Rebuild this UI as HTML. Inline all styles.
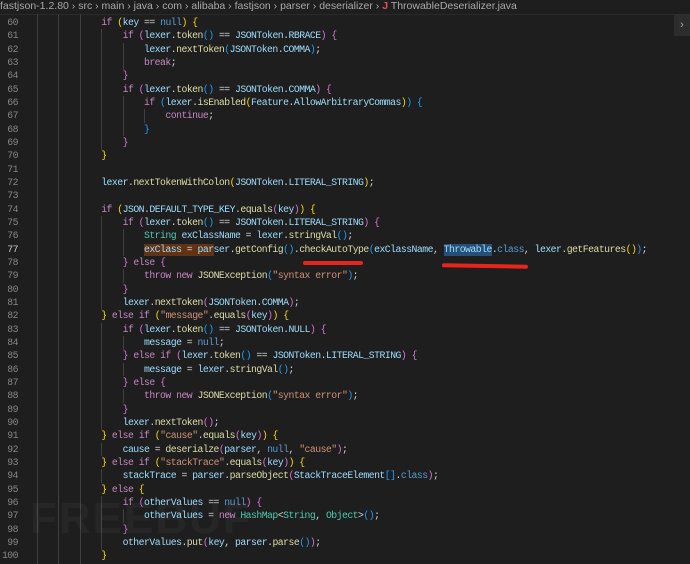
<!DOCTYPE html>
<html><head><meta charset="utf-8"><style>
html,body{margin:0;padding:0;background:#1e1e1e;width:690px;height:564px;overflow:hidden;position:relative}
#bc{position:absolute;left:0;top:0;height:14px;width:690px;font:10.5px "Liberation Sans",sans-serif;color:#a9a9a9;line-height:12px;white-space:pre;border-bottom:1px solid #2a2a2a}
.l{position:absolute;left:0;height:13.33px;white-space:pre;font-family:"Liberation Mono",monospace;font-size:9.8px;letter-spacing:-0.53px;line-height:13.33px}
.n{position:absolute;width:18px;text-align:right;color:#858585;left:0}
.c{position:absolute;left:37px;color:#d4d4d4}
.g{position:absolute;width:1px;background:#404040}
</style></head><body>
<div id="bc">fastjson-1.2.80 › src › main › java › com › alibaba › fastjson › parser › deserializer › <span style="color:#e05050;font-weight:bold">J</span> ThrowableDeserializer.java</div>
<div style="position:absolute;left:674px;top:14px;width:16px;height:22px;background:#2d2d2d;color:#aaa;font:11px 'Liberation Sans';text-align:center;line-height:22px">›</div>
<div id="code"></div>
<div style="position:absolute;left:30px;top:494px;font:bold 44px 'Liberation Sans',sans-serif;color:#fff;opacity:0.035;letter-spacing:2px">FREEBUF</div>
<script>
var L=[
[12,"if (key == null) {"],[16,"if (lexer.token() == JSONToken.RBRACE) {"],[20,"lexer.nextToken(JSONToken.COMMA);"],[20,"break;"],[16,"}"],[16,"if (lexer.token() == JSONToken.COMMA) {"],[20,"if (lexer.isEnabled(Feature.AllowArbitraryCommas)) {"],[24,"continue;"],[20,"}"],[16,"}"],[12,"}"],[0,""],[12,"lexer.nextTokenWithColon(JSONToken.LITERAL_STRING);"],[0,""],
[12,"if (JSON.DEFAULT_TYPE_KEY.equals(key)) {"],[16,"if (lexer.token() == JSONToken.LITERAL_STRING) {"],[20,"String exClassName = lexer.stringVal();"],[20,"exClass = parser.getConfig().checkAutoType(exClassName, Throwable.class, lexer.getFeatures());"],[16,"} else {"],[20,"throw new JSONException(\"syntax error\");"],[16,"}"],[16,"lexer.nextToken(JSONToken.COMMA);"],
[12,"} else if (\"message\".equals(key)) {"],[16,"if (lexer.token() == JSONToken.NULL) {"],[20,"message = null;"],[16,"} else if (lexer.token() == JSONToken.LITERAL_STRING) {"],[20,"message = lexer.stringVal();"],[16,"} else {"],[20,"throw new JSONException(\"syntax error\");"],[16,"}"],[16,"lexer.nextToken();"],
[12,"} else if (\"cause\".equals(key)) {"],[16,"cause = deserialze(parser, null, \"cause\");"],[12,"} else if (\"stackTrace\".equals(key)) {"],[16,"stackTrace = parser.parseObject(StackTraceElement[].class);"],[12,"} else {"],[16,"if (otherValues == null) {"],[20,"otherValues = new HashMap<String, Object>();"],[16,"}"],[16,"otherValues.put(key, parser.parse());"],[12,"}"]];
var KW={"if":1,"else":1,"break":1,"continue":1,"throw":1,"new":1,"return":1};
var TEAL={"String":1,"HashMap":1,"Object":1};
var BC=["#ffd700","#da70d6","#179fff"];
var d=0,h="",CW=5.35,LH=13.33,T=16;
function esc(s){return s.replace(/&/g,"&amp;").replace(/</g,"&lt;").replace(/>/g,"&gt;")}
for(var k=0;k<3;k++)h+='<div class="g" style="left:'+(37+k*21.4)+'px;top:14px;height:550px"></div>';
L.forEach(function(x,i){
 var y=T+i*LH,ind=x[0];
 for(var k=3;k<ind/4;k++)h+='<div class="g" style="left:'+(37+k*21.4)+'px;top:'+y+'px;height:'+(LH+0.5)+'px"></div>';
});
h+='<div style="position:absolute;left:'+(37+20*CW)+'px;top:'+(T+17*LH+1)+'px;width:'+(13*CW)+'px;height:12px;background:#613214"></div>';
h+='<div style="position:absolute;left:'+(37+76*CW)+'px;top:'+(T+17*LH+1)+'px;width:'+(9*CW)+'px;height:12px;background:#264f78"></div>';
L.forEach(function(x,i){
 var y=T+i*LH,s=x[1],o="",j=0;
 while(j<s.length){
  var c=s[j],m;
  if(c=='"'){var e=s.indexOf('"',j+1);o+='<span style="color:#ce9178">'+esc(s.slice(j,e+1))+'</span>';j=e+1;continue}
  if(/[A-Za-z_]/.test(c)){m=s.slice(j).match(/^[A-Za-z_0-9]+/)[0];var col="#9cdcfe";var nx=s[j+m.length];
   if(KW[m])col="#c586c0";else if(m=="null"||m=="class")col="#569cd6";else if(nx=="(")col="#dcdcaa";else if(TEAL[m])col="#4ec9b0";
   o+='<span style="color:'+col+'">'+m+'</span>';j+=m.length;continue}
  if("({[".indexOf(c)>=0){o+='<span style="color:'+BC[d%3]+'">'+c+'</span>';d++;j++;continue}
  if(")}]".indexOf(c)>=0){d--;o+='<span style="color:'+BC[(d%3+3)%3]+'">'+c+'</span>';j++;continue}
  o+=esc(c);j++;
 }
 h+='<div class="l" style="top:'+y+'px;width:690px"><span class="n" style="'+(i==17?'color:#c6c6c6':'')+'">'+(60+i)+'</span><span class="c">'+" ".repeat(x[0])+o+'</span></div>';
});
h+='<div style="position:absolute;left:303px;top:261px;width:60px;height:4px;border-radius:2px;background:#e8251c"></div>';
h+='<div style="position:absolute;left:442px;top:264px;width:86px;height:4px;border-radius:2px;background:#e8251c;transform:rotate(1deg)"></div>';
document.getElementById("code").innerHTML=h;
</script>
</body></html>
